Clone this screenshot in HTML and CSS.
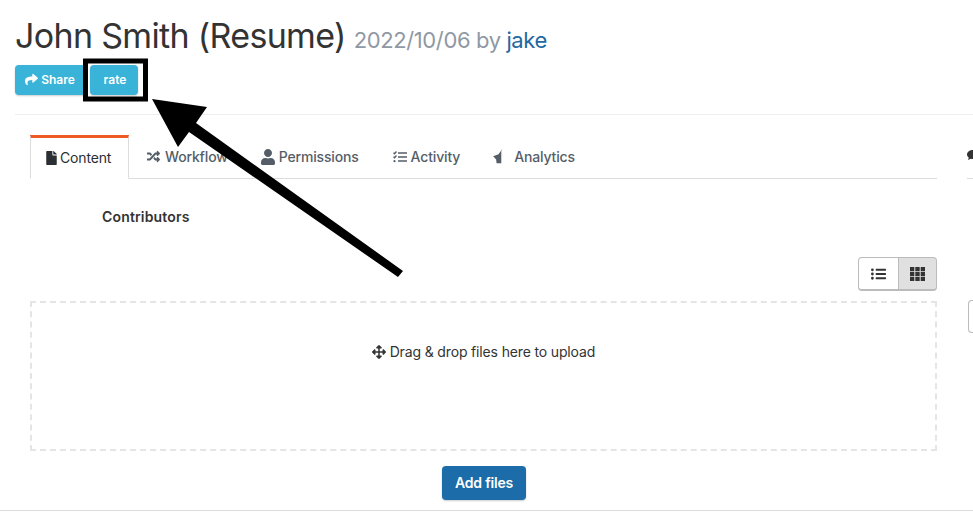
FILE: index.html
```html
<!DOCTYPE html>
<html lang="en">
<head>
<meta charset="utf-8">
<title>John Smith (Resume)</title>
<link rel="stylesheet" href="styles.css">
</head>
<body>
<div class="page">
  <header class="head">
    <h1 class="title">John Smith (Resume) <small class="meta">2022/10/06 by <a class="author" href="#">jake</a></small></h1>
    <div class="actions">
      <a class="btn btn-info btn-share" href="#"><svg class="ico" viewBox="0 0 512 512"><path fill="currentColor" d="M503.7 189.8 327.7 37.9C312.3 24.6 288 35.4 288 56v80.1C127.400 137.900 0 170.100 0 322.300c0 61.400 39.600 122.300 83.300 154.100 13.700 9.900 33.100-2.500 28.100-18.600C66 312.400 132.900 274.400 288 272.100V360c0 20.700 24.300 31.400 39.700 18.200l176-152c11.100-9.600 11.100-26.800 0-36.400z"/></svg> Share</a>
      <a class="btn btn-info btn-rate" href="#">rate</a>
    </div>
  </header>
  <main class="content">
    <section class="main-col">
      <nav class="tabs">
        <a class="tab active" href="#"><svg class="ico ico-file" viewBox="0 0 384 512"><path fill="currentColor" d="M224 136V0H24C10.700 0 0 10.700 0 24v464c0 13.300 10.700 24 24 24h336c13.300 0 24-10.700 24-24V160H248c-13.200 0-24-10.800-24-24zm160-14.100v6.100H256V0h6.100c6.400 0 12.500 2.500 17 7l97.900 98c4.500 4.500 7 10.600 7 16.900z"/></svg> Content</a>
        <a class="tab" href="#"><svg class="ico ico-shuffle" viewBox="0 0 512 512"><path fill="currentColor" d="M504.970 359.030c9.370 9.370 9.370 24.570 0 33.940l-80 79.980c-15.010 15.010-40.970 4.490-40.970-16.970V416h-58.790a12 12 0 0 1-8.780-3.820l-70.500-75.530 53.330-57.140L352 336h32v-39.980c0-21.440 25.940-32 40.970-16.970l80 79.980zM12 176h84l52.790 56.570 53.330-57.140-70.500-75.530A12 12 0 0 0 122.840 96H12c-6.630 0-12 5.370-12 12v56c0 6.630 5.370 12 12 12zm372 0v39.980c0 21.460 25.960 31.980 40.970 16.970l80-79.980c9.370-9.370 9.370-24.570 0-33.940l-80-79.980C409.940 24.020 384 34.580 384 56.020V96h-58.790a12 12 0 0 0-8.780 3.820L96 336H12c-6.630 0-12 5.370-12 12v56c0 6.630 5.370 12 12 12h110.840c3.330 0 6.510-1.380 8.780-3.820L352 176h32z"/></svg> Workflow</a>
        <a class="tab" href="#"><svg class="ico ico-user" viewBox="0 0 448 512"><path fill="currentColor" d="M224 256c70.700 0 128-57.300 128-128S294.700 0 224 0 96 57.300 96 128s57.300 128 128 128zm89.600 32h-16.700c-22.200 10.200-46.900 16-72.900 16s-50.600-5.800-72.900-16h-16.700C60.200 288 0 348.200 0 422.400V464c0 26.500 21.500 48 48 48h352c26.500 0 48-21.500 48-48v-41.600c0-74.200-60.200-134.400-134.400-134.400z"/></svg> Permissions</a>
        <a class="tab tab-activity" href="#"><svg class="ico ico-tasks" viewBox="0 0 14 12"><path fill="none" stroke="currentColor" stroke-width="1.300" d="M5 2h9M5 6h9M5 10h9M.5 1.800l1 1 2-2.300M.5 5.800l1 1 2-2.300"/><circle cx="1.500" cy="10.200" r="1.100" fill="currentColor"/></svg> Activity</a>
        <a class="tab tab-analytics" href="#"><svg class="ico ico-chart" viewBox="0 0 10 14"><path fill="currentColor" d="M8.500 0 7.600 2.200V13.400H3.200L2.800 9.700 0 6.700 5 4.800Z"/></svg> Analytics</a>
      </nav>
      <h2 class="contributors">Contributors</h2>
      <div class="toolbar">
        <div class="toggle">
          <button class="toggle-btn" type="button"><svg class="ico" viewBox="0 0 512 448"><path fill="currentColor" d="M48 32a48 48 0 1 0 0 96 48 48 0 0 0 0-96zm0 144a48 48 0 1 0 0 96 48 48 0 0 0 0-96zm0 144a48 48 0 1 0 0 96 48 48 0 0 0 0-96zM496 48H176c-8.800 0-16 7.200-16 16v32c0 8.800 7.200 16 16 16h320c8.800 0 16-7.200 16-16V64c0-8.800-7.200-16-16-16zm0 144H176c-8.800 0-16 7.200-16 16v32c0 8.800 7.200 16 16 16h320c8.800 0 16-7.200 16-16v-32c0-8.800-7.200-16-16-16zm0 144H176c-8.800 0-16 7.200-16 16v32c0 8.800 7.200 16 16 16h320c8.800 0 16-7.200 16-16v-32c0-8.800-7.200-16-16-16z"/></svg></button>
          <button class="toggle-btn on" type="button"><svg class="ico" viewBox="0 0 15 14"><path fill="currentColor" d="M0 0h4.300v4.200H0zM5.300 0h4.400v4.200H5.300zM10.700 0H15v4.200h-4.300zM0 5h4.300v4H0zM5.300 5h4.400v4H5.300zM10.700 5H15v4h-4.300zM0 9.800h4.300V14H0zM5.300 9.800h4.400V14H5.300zM10.700 9.800H15V14h-4.300z"/></svg></button>
        </div>
      </div>
      <div class="dropzone"><svg class="ico ico-move" viewBox="0 0 512 512"><path fill="currentColor" d="M352.201 425.775l-79.196 79.196c-9.373 9.373-24.568 9.373-33.941 0l-79.196-79.196c-15.119-15.119-4.411-40.971 16.971-40.971h51.162L228 284H127.196v51.162c0 21.382-25.851 32.090-40.971 16.971L7.029 272.937c-9.373-9.373-9.373-24.569 0-33.941L86.225 159.800c15.119-15.119 40.971-4.411 40.971 16.971V228H228V127.196h-51.230c-21.382 0-32.090-25.851-16.971-40.971l79.196-79.196c9.373-9.373 24.568-9.373 33.941 0l79.196 79.196c15.119 15.119 4.411 40.971-16.971 40.971h-51.162V228h100.804v-51.162c0-21.382 25.851-32.090 40.970-16.971l79.196 79.196c9.373 9.373 9.373 24.569 0 33.941L425.773 352.200c-15.119 15.119-40.971 4.411-40.970-16.971V284H284v100.804h51.230c21.382 0 32.090 25.851 16.971 40.971z"/></svg> Drag &amp; drop files here to upload</div>
      <div class="add-row"><a class="btn btn-primary" href="#">Add files</a></div>
    </section>
    <aside class="side-col">
      <div class="side-tabs"><svg class="ico side-ico" viewBox="0 0 14 12"><path fill="currentColor" d="M6 0c3.300 0 6 2 6 4.500S9.300 9 6 9c-.8 0-1.500-.1-2.200-.3L1 10l.8-2.300C.7 6.900 0 5.800 0 4.500 0 2 2.700 0 6 0z"/></svg></div>
      <div class="side-box"></div>
    </aside>
  </main>
  <div class="foot-rule"></div>
</div>
<svg class="annotation" viewBox="0 0 973 521" width="973" height="521">
  <rect class="anno-box" x="85.500" y="61" width="60" height="38"/>
  <path class="anno-arrow" d="M152 99 207 107 196 123 403 271 398 277 189 132 178 147Z"/>
</svg>
</body>
</html>
```
FILE: styles.css
```css
* { box-sizing: border-box; }
html, body { margin: 0; height: 100%; }
body {
  font-family: Inter, "Liberation Sans", sans-serif;
  font-size: 14px;
  color: #333;
  background: #fff;
  overflow: hidden;
  position: relative;
}
a { text-decoration: none; }
.ico { display: inline-block; width: 13px; height: 13px; vertical-align: -2px; }

.page { height: 521px; display: flex; flex-direction: column; }

.head {
  height: 115px;
  margin-left: 15px;
  padding-top: 16px;
  border-bottom: 1px solid #eee;
}
.title {
  margin: 0;
  height: 40px;
  font-size: 34px;
  font-weight: 400;
  letter-spacing: -.67px;
  line-height: 40px;
  color: #333;
  white-space: nowrap;
}
.meta { margin-left: -1px; font-size: 22px; letter-spacing: -.38px; color: #8f98a3; font-weight: 400; }
.author { color: #23689f; }
.actions { display: flex; margin-top: 9px; gap: 5px; }
.btn {
  display: inline-flex;
  align-items: center;
  justify-content: center;
  padding-bottom: 2px;
  border-radius: 4px;
  color: #fff;
  font-weight: 600;
  box-shadow: 0 1px 2px rgba(0, 0, 0, .2);
}
.btn-info { background: #39b3d7; height: 30px; font-size: 12px; gap: 3px; }
.btn-share { width: 70px; border-radius: 4px 0 0 4px; }
.btn-rate { width: 48px; padding-left: 2px; }
.btn-primary { background: #1b6ca8; width: 84px; height: 34px; font-size: 14px; letter-spacing: -.2px; }

.content { display: flex; height: 395px; }
.main-col { margin-left: 30px; width: 907px; flex: none; }
.side-col { margin-left: 30px; flex: 1; min-width: 0; }

.tabs {
  display: flex;
  margin-top: 20px;
  height: 44px;
  border-bottom: 1px solid #ddd;
}
.tab {
  display: flex;
  align-items: center;
  gap: 4px;
  padding: 0 16px 0 17px;
  color: #555e68;
  font-size: 14px;
  font-weight: 500;
  letter-spacing: -.16px;
  height: 43px;
}
.tab.active {
  width: 99px;
  height: 44px;
  padding: 0 0 1px 15px;
  gap: 3px;
  color: #2b2f33;
  background: #fff;
  font-weight: 400;
  border-top: 3px solid #ee5a24;
  border-left: 1px solid #ddd;
  border-right: 1px solid #ddd;
  border-bottom: 1px solid #fff;
}
.ico-file { width: 11px; height: 14px; }
.ico-shuffle { width: 15px; height: 13px; }
.ico-user { width: 14px; height: 16px; }
.ico-tasks { width: 14px; height: 12px; }
.ico-chart { width: 11px; height: 15px; margin-right: 6px; }
.tab-activity { padding-left: 18px; }
.tab-analytics { padding-left: 17px; }

.contributors {
  margin: 29px 0 0 72px;
  font-size: 14px;
  font-weight: 600;
  letter-spacing: .16px;
  line-height: 17px;
  color: #333;
}
.toolbar { display: flex; justify-content: flex-end; margin-top: 32px; }
.toggle { display: flex; height: 34px; }
.toggle-btn {
  width: 41px;
  height: 34px;
  padding: 0;
  background: #fff;
  color: #333;
  border: 1px solid #bbb;
  border-bottom-width: 2px;
  border-radius: 4px 0 0 4px;
  display: flex;
  align-items: center;
  justify-content: center;
}
.toggle-btn.on {
  width: 38px;
  background: #e0e0e0;
  border-left: 0;
  border-radius: 0 4px 4px 0;
}
.toggle-btn .ico { width: 15px; height: 14px; vertical-align: 0; }
.dropzone {
  margin-top: 10px;
  height: 150px;
  border: 2px dashed #e5e5e5;
  padding-top: 40px;
  text-align: center;
  font-size: 14px;
  letter-spacing: -.15px;
  line-height: 18px;
  color: #333;
}
.ico-move { width: 14px; height: 14px; }
.add-row { display: flex; justify-content: center; margin-top: 15px; margin-left: 1px; }

.side-tabs { margin-top: 20px; height: 44px; border-bottom: 1px solid #ddd; padding-top: 15px; }
.side-ico { display: block; width: 14px; height: 12px; }
.side-box {
  margin: 121px 0 0 1px;
  height: 33px;
  border: 1px solid #bbb;
  border-right: 0;
  border-radius: 4px 0 0 4px;
}
.foot-rule { height: 1px; background: #ddd; }

.annotation { position: absolute; left: 0; top: 0; pointer-events: none; }
.anno-box { fill: none; stroke: #000; stroke-width: 5px; }
.anno-arrow { fill: #000; }
```
